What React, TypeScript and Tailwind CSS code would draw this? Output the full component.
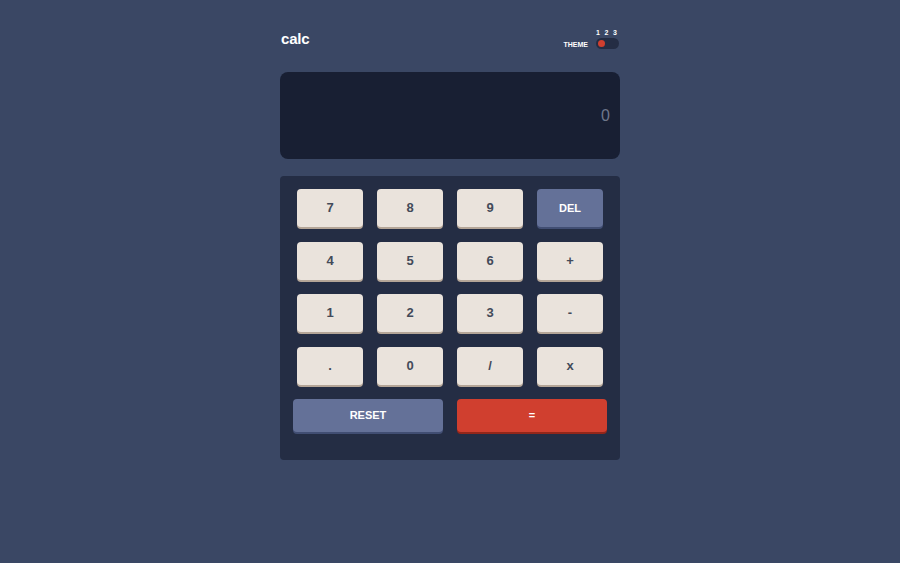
import React from 'react'

const rows = [
  ['7', '8', '9', 'DEL'],
  ['4', '5', '6', '+'],
  ['1', '2', '3', '-'],
  ['.', '0', '/', 'x'],
]

function Key({ label }: { label: string }) {
  if (label === 'DEL') {
    return (
      <button className="h-[38px] rounded-[4px] bg-[#647198] text-[11px] font-bold text-white shadow-[0_2px_0_#414e73]">
        {label}
      </button>
    )
  }
  return (
    <button className="h-[38px] rounded-[4px] bg-[#eae3dc] text-[13px] font-bold text-[#434a59] shadow-[0_2px_0_#b4a597]">
      {label}
    </button>
  )
}

export default function App() {
  return (
    <div
      className="min-h-screen bg-[#3a4764] pt-[28px]"
      style={{ fontFamily: '"Liberation Sans", Arial, sans-serif' }}
    >
      <div className="mx-auto w-[340px]">
        {/* Header */}
        <div className="flex h-[22px] items-center justify-between">
          <h1 className="pl-[1px] text-[15px] font-bold leading-[20px] tracking-[-0.2px] text-white">calc</h1>
          <div className="mr-[1px] flex items-end gap-[8px]">
            <span className="mb-[1px] text-[7px] font-bold leading-none text-white">THEME</span>
            <div className="flex flex-col items-center">
              <div className="mb-[2px] flex w-[23px] justify-between pl-[0px] pr-[2px] text-[7px] font-bold leading-none text-white">
                <span>1</span>
                <span>2</span>
                <span>3</span>
              </div>
              <div className="flex h-[11px] w-[23px] items-center rounded-full bg-[#242d44] px-[2px]">
                <div className="h-[7px] w-[7px] rounded-full bg-[#d03f2f]" />
              </div>
            </div>
          </div>
        </div>

        {/* Display */}
        <div className="mt-[22px] flex h-[87px] items-center justify-end rounded-[8px] bg-[#181f33] pr-[10px]">
          <span className="text-[16px] font-normal text-[#6f778b]">0</span>
        </div>

        {/* Keypad */}
        <div className="mt-[17px] h-[284px] rounded-[4px] bg-[#242d44] pt-[13px]">
          <div className="grid grid-cols-4 gap-x-[14px] gap-y-[14.5px] px-[17px]">
            {rows.flat().map((k) => (
              <Key key={k} label={k} />
            ))}
          </div>
          <div className="mt-[14.5px] grid grid-cols-2 gap-x-[14px] px-[13px]">
            <button className="h-[33px] rounded-[4px] bg-[#647198] text-[11px] font-bold text-white shadow-[0_2px_0_#414e73]">
              RESET
            </button>
            <button className="h-[33px] rounded-[4px] bg-[#d03f2f] text-[11px] font-bold text-white shadow-[0_2px_0_#93261a]">
              =
            </button>
          </div>
        </div>
      </div>
    </div>
  )
}
